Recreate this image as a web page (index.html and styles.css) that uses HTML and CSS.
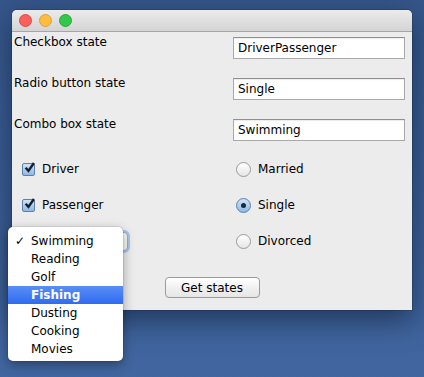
FILE: index.html
```html
<!DOCTYPE html>
<html lang="en">
<head>
    <meta charset="UTF-8">
    <title>States</title>
    <link rel="stylesheet" href="styles.css">
</head>
<body>
    <div class="window">
        <div class="titlebar">
            <span class="light red"></span>
            <span class="light yellow"></span>
            <span class="light green"></span>
        </div>

        <div class="content">
            <div class="row row-field">
                <div class="label">Checkbox state</div>
                <div class="field">DriverPassenger</div>
            </div>
            <div class="row row-field">
                <div class="label">Radio button state</div>
                <div class="field">Single</div>
            </div>
            <div class="row row-field short">
                <div class="label">Combo box state</div>
                <div class="field">Swimming</div>
            </div>

            <div class="row row-option">
                <div class="cell">
                    <span class="check"><svg viewBox="0 0 10 10"><path d="M2 5.2 L4.2 7.6 L8.4 1.6" /></svg></span>
                    <span>Driver</span>
                </div>
                <div class="cell">
                    <span class="radio"></span>
                    <span>Married</span>
                </div>
            </div>
            <div class="row row-option">
                <div class="cell">
                    <span class="check"><svg viewBox="0 0 10 10"><path d="M2 5.2 L4.2 7.6 L8.4 1.6" /></svg></span>
                    <span>Passenger</span>
                </div>
                <div class="cell">
                    <span class="radio on"></span>
                    <span>Single</span>
                </div>
            </div>
            <div class="row row-option">
                <div class="cell">
                    <span class="combo"></span>
                </div>
                <div class="cell">
                    <span class="radio"></span>
                    <span>Divorced</span>
                </div>
            </div>

            <div class="row-button">
                <button class="button">Get states</button>
            </div>
        </div>

        <ul class="popup">
            <li><span class="tick">✓</span>Swimming</li>
            <li>Reading</li>
            <li>Golf</li>
            <li class="selected">Fishing</li>
            <li>Dusting</li>
            <li>Cooking</li>
            <li>Movies</li>
        </ul>
    </div>
</body>
</html>
```

FILE: styles.css
```css
* {
    margin: 0;
    padding: 0;
    box-sizing: border-box;
}

body {
    width: 424px;
    height: 377px;
    overflow: hidden;
    background: linear-gradient(to bottom, #35568a 0%, #3b5e95 60%, #4166a0 100%);
    font-family: "DejaVu Sans", Verdana, sans-serif;
    font-size: 12px;
    color: #000;
    padding: 10px 0 0 12px;
}

.window {
    position: relative;
    width: 400px;
    height: 300px;
    background: #ececec;
    border-radius: 5px 5px 0 0;
    box-shadow: 0 10px 28px rgba(10, 20, 40, 0.55), 0 0 0 1px rgba(0, 0, 0, 0.15);
}

.titlebar {
    height: 22px;
    display: flex;
    align-items: center;
    gap: 7px;
    padding: 0 0 0 7px;
    border-radius: 5px 5px 0 0;
    background: linear-gradient(to bottom, #ebebeb, #d4d4d4);
    border-bottom: 1px solid #a6a6a6;
}

.light {
    width: 13px;
    height: 13px;
    border-radius: 50%;
}

.red { background: #fc605c; border: 1px solid #de4a46; }
.yellow { background: #fdbc40; border: 1px solid #dea236; }
.green { background: #34c84a; border: 1px solid #27aa35; }

.content {
    display: flex;
    flex-direction: column;
}

.row {
    display: flex;
}

.row-field {
    height: 41px;
}

.row-field.short {
    height: 37px;
}

.label {
    width: 221px;
    padding: 3px 0 0 2px;
    line-height: 14px;
}

.field {
    width: 172px;
    height: 22px;
    margin-top: 5px;
    background: #fff;
    border: 1px solid #a9a9a9;
    border-top-color: #8f8f8f;
    box-shadow: inset 0 1px 1px rgba(0, 0, 0, 0.08);
    padding: 0 0 0 4px;
    line-height: 20px;
}

.row-option {
    height: 36px;
    align-items: center;
}

.cell {
    display: flex;
    align-items: center;
    gap: 7px;
}

.cell:first-child {
    width: 224px;
    padding-left: 10px;
}

.check {
    width: 13px;
    height: 13px;
    border-radius: 2px;
    border: 1px solid #5f7fa8;
    background: linear-gradient(to bottom, #cfe3f8, #8fb8e6);
    display: flex;
    overflow: visible;
}

.check svg {
    width: 13px;
    height: 13px;
    margin: -3px 0 0 0;
    fill: none;
    stroke: #16222f;
    stroke-width: 1.9;
    overflow: visible;
}

.radio {
    width: 15px;
    height: 15px;
    border-radius: 50%;
    border: 1px solid #9a9a9a;
    background: linear-gradient(to bottom, #ffffff, #e6e6e6);
    display: flex;
    align-items: center;
    justify-content: center;
}

.radio.on {
    border-color: #5f7fa8;
    background: linear-gradient(to bottom, #cfe3f8, #8fb8e6);
}

.radio.on::after {
    content: "";
    width: 5px;
    height: 5px;
    border-radius: 50%;
    background: #1b2a3a;
}

.combo {
    width: 106px;
    height: 19px;
    border-radius: 4px;
    border: 1px solid #8ab0dc;
    box-shadow: 0 0 0 2px rgba(120, 165, 225, 0.55);
    background: #fafafa;
}

.row-button {
    display: flex;
    justify-content: center;
    padding-top: 18px;
}

.button {
    width: 95px;
    height: 21px;
    font-family: "DejaVu Sans", Verdana, sans-serif;
    font-size: 12px;
    color: #000;
    border: 1px solid #9b9b9b;
    border-radius: 4px;
    background: linear-gradient(to bottom, #ffffff, #f1f1f1 50%, #e6e6e6);
}

.popup {
    position: absolute;
    left: -4px;
    top: 217px;
    width: 115px;
    list-style: none;
    background: #fff;
    border-radius: 5px;
    padding: 5px 0 3px 0;
    box-shadow: 0 4px 12px rgba(0, 0, 0, 0.35), 0 0 0 1px rgba(0, 0, 0, 0.08);
}

.popup li {
    height: 18px;
    line-height: 18px;
    padding-left: 23px;
    position: relative;
}

.popup .tick {
    position: absolute;
    left: 7px;
    font-weight: bold;
}

.popup .selected {
    background: linear-gradient(to bottom, #5a8ef5, #2f6bf0);
    color: #fff;
    font-weight: bold;
}
```
